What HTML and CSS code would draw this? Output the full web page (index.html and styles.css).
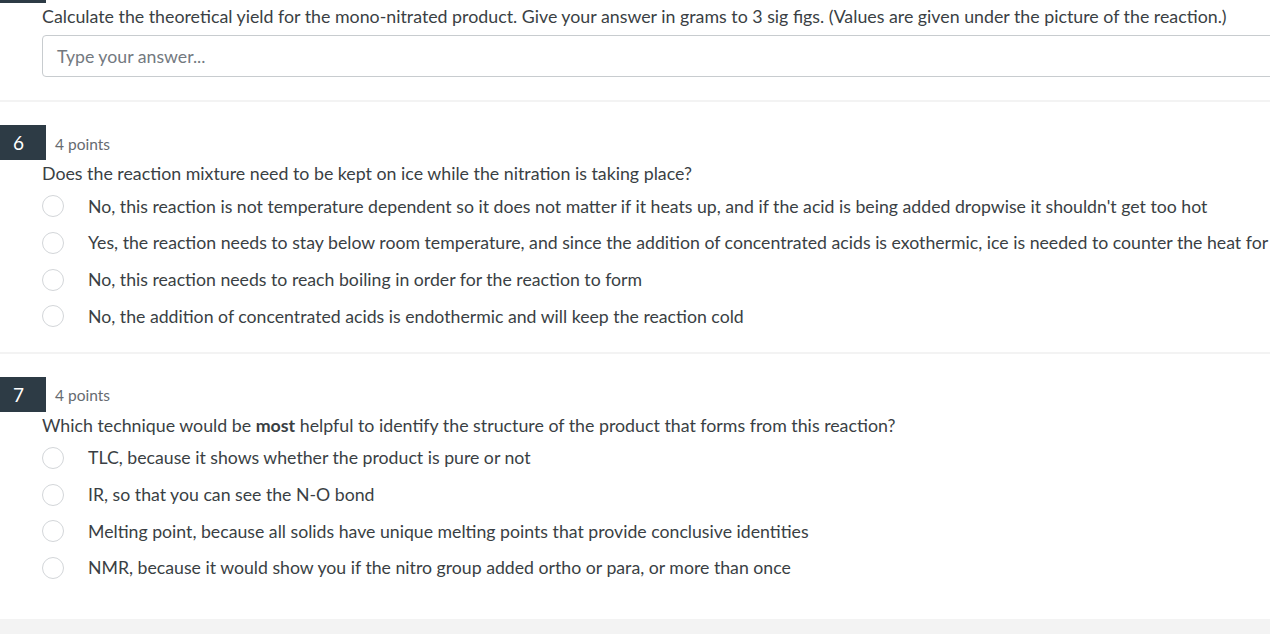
FILE: index.html
```html
<!DOCTYPE html>
<html>
<head>
<meta charset="utf-8">
<link rel="stylesheet" href="styles.css">
</head>
<body>
<div class="page">
  <section class="question first">
    <div class="badge-stub"></div>
    <p class="q-text">Calculate the theoretical yield for the mono-nitrated product. Give your answer in grams to 3 sig figs. (Values are given under the picture of the reaction.)</p>
    <div class="answer-box"><span class="placeholder">Type your answer...</span></div>
  </section>

  <section class="question">
    <div class="q-header">
      <div class="badge">6</div>
      <div class="points">4 points</div>
    </div>
    <p class="q-text">Does the reaction mixture need to be kept on ice while the nitration is taking place?</p>
    <ul class="options">
      <li class="option"><span class="radio"></span><span class="label">No, this reaction is not temperature dependent so it does not matter if it heats up, and if the acid is being added dropwise it shouldn't get too hot</span></li>
      <li class="option"><span class="radio"></span><span class="label">Yes, the reaction needs to stay below room temperature, and since the addition of concentrated acids is exothermic, ice is needed to counter the heat for</span></li>
      <li class="option"><span class="radio"></span><span class="label">No, this reaction needs to reach boiling in order for the reaction to form</span></li>
      <li class="option"><span class="radio"></span><span class="label">No, the addition of concentrated acids is endothermic and will keep the reaction cold</span></li>
    </ul>
  </section>

  <section class="question last">
    <div class="q-header">
      <div class="badge">7</div>
      <div class="points">4 points</div>
    </div>
    <p class="q-text">Which technique would be <strong>most</strong> helpful to identify the structure of the product that forms from this reaction?</p>
    <ul class="options">
      <li class="option"><span class="radio"></span><span class="label">TLC, because it shows whether the product is pure or not</span></li>
      <li class="option"><span class="radio"></span><span class="label">IR, so that you can see the N-O bond</span></li>
      <li class="option"><span class="radio"></span><span class="label">Melting point, because all solids have unique melting points that provide conclusive identities</span></li>
      <li class="option"><span class="radio"></span><span class="label">NMR, because it would show you if the nitro group added ortho or para, or more than once</span></li>
    </ul>
  </section>
</div>
</body>
</html>
```

FILE: styles.css
```css
html, body {
  margin: 0;
  padding: 0;
  height: 100%;
  overflow: hidden;
}
body {
  background: #f3f3f3;
  font-family: Lato, "Open Sans", "Liberation Sans", sans-serif;
  color: #3a3f44;
}
.page {
  width: 1400px;
  display: flex;
  flex-direction: column;
  gap: 2px;
}
.question {
  background: #ffffff;
  padding: 23px 0 17px 0;
}
.question.first {
  padding-top: 0;
  padding-bottom: 23px;
}
.question.last {
  padding-bottom: 33px;
}
.badge-stub {
  width: 46px;
  height: 3px;
  background: #2d3b45;
}
.q-header {
  display: flex;
  align-items: center;
  height: 35px;
}
.badge {
  width: 46px;
  height: 35px;
  box-sizing: border-box;
  background: #2d3b45;
  color: #ffffff;
  font-size: 19px;
  line-height: 35px;
  padding-left: 13px;
}
.points {
  margin-left: 9px;
  padding-top: 2px;
  font-size: 15.5px;
  color: #666b70;
}
.q-text {
  margin: 0 0 0 42px;
  font-size: 17.8px;
  line-height: 26px;
  white-space: nowrap;
}
.answer-box {
  margin: 6px 0 0 42px;
  height: 42px;
  box-sizing: border-box;
  border: 1px solid #c8cccf;
  border-radius: 4px;
  display: flex;
  align-items: center;
  padding-left: 14px;
}
.placeholder {
  font-size: 17.7px;
  color: #737980;
}
.options {
  list-style: none;
  margin: 2px 0 0 42px;
  padding: 0;
}
.option {
  display: flex;
  align-items: center;
  height: 36.67px;
  white-space: nowrap;
}
.radio {
  width: 22px;
  height: 22px;
  box-sizing: border-box;
  border: 1px solid #d3d6d9;
  border-radius: 50%;
  background: #fff;
  flex: none;
  margin-right: 24px;
}
.label {
  font-size: 17.7px;
}
```
